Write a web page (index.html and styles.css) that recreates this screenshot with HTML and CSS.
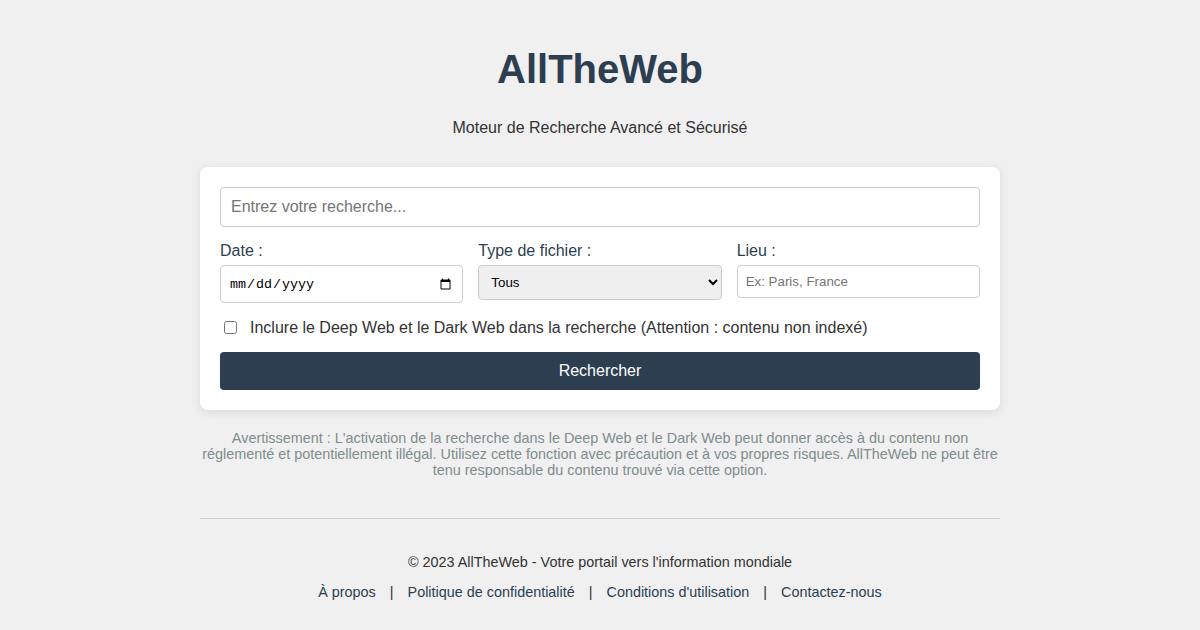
FILE: index.html
```html
<!DOCTYPE html>
<html lang="fr">
<head>
<meta charset="utf-8">
<title>AllTheWeb</title>
<link rel="stylesheet" href="styles.css">
</head>
<body>
<div class="container">
  <header class="header">
    <h1 class="logo">AllTheWeb</h1>
    <p class="subtitle">Moteur de Recherche Avancé et Sécurisé</p>
  </header>
  <form class="card">
    <input class="search" type="text" placeholder="Entrez votre recherche...">
    <div class="filters">
      <div class="field">
        <label class="label" for="date">Date :</label>
        <input class="control date" id="date" type="date">
      </div>
      <div class="field">
        <label class="label" for="type">Type de fichier :</label>
        <select class="control select" id="type">
          <option>Tous</option>
        </select>
      </div>
      <div class="field">
        <label class="label" for="lieu">Lieu :</label>
        <input class="control" id="lieu" type="text" placeholder="Ex: Paris, France">
      </div>
    </div>
    <div class="check-row">
      <input class="check" type="checkbox" id="deep">
      <label class="check-label" for="deep">Inclure le Deep Web et le Dark Web dans la recherche (Attention : contenu non indexé)</label>
    </div>
    <button class="submit" type="button">Rechercher</button>
  </form>
  <p class="warning">Avertissement : L'activation de la recherche dans le Deep Web et le Dark Web peut donner accès à du contenu non réglementé et potentiellement illégal. Utilisez cette fonction avec précaution et à vos propres risques. AllTheWeb ne peut être tenu responsable du contenu trouvé via cette option.</p>
  <footer class="footer">
    <p class="footer-text">© 2023 AllTheWeb - Votre portail vers l'information mondiale</p>
    <p class="footer-links">
      <a href="#">À propos</a><span class="sep">|</span><a href="#">Politique de confidentialité</a><span class="sep">|</span><a href="#">Conditions d'utilisation</a><span class="sep">|</span><a href="#">Contactez-nous</a>
    </p>
  </footer>
</div>
</body>
</html>
```
FILE: styles.css
```css
* { box-sizing: border-box; }
html, body { height: 100%; }
body {
  margin: 0;
  padding: 20px;
  background: #f0f0f0;
  font-family: "Liberation Sans", Arial, sans-serif;
  color: #333;
  overflow: hidden;
}
.container {
  max-width: 800px;
  margin: 0 auto;
}
.header { text-align: center; }
.logo {
  margin: 27px 0 27px;
  font-size: 40px;
  font-weight: bold;
  color: #2c3e50;
}
.subtitle {
  margin: 0 0 30px;
  font-size: 16px;
  color: #333;
}
.card {
  background: #fff;
  border-radius: 8px;
  padding: 20px;
  box-shadow: 0 2px 10px rgba(0,0,0,0.1);
}
.search {
  display: block;
  width: 100%;
  padding: 10px;
  font-size: 16px;
  font-family: "Liberation Sans", Arial, sans-serif;
  border: 1px solid #ccc;
  border-radius: 4px;
  margin-bottom: 15px;
}
.filters {
  display: flex;
  gap: 15px;
  margin-bottom: 15px;
}
.field { flex: 1; min-width: 0; }
.label {
  display: block;
  margin-bottom: 5px;
  font-size: 16px;
  color: #2c3e50;
}
.control {
  display: block;
  width: 100%;
  padding: 8px;
  border: 1px solid #ccc;
  border-radius: 4px;
}
.date {
  font-family: "Liberation Mono", "Courier New", monospace;
  padding: 9.5px 8px;
}
.date::-webkit-datetime-edit {
  font-family: "Liberation Mono", "Courier New", monospace;
}
.select { background: #efefef; }
.check-row {
  display: flex;
  align-items: center;
  margin-bottom: 15px;
  font-size: 16px;
}
.check {
  margin: 3px 13px 3px 4px;
}
.check-label { color: #333; }
.submit {
  display: block;
  width: 100%;
  padding: 10px;
  border: none;
  border-radius: 4px;
  background: #2c3e50;
  color: #fff;
  font-size: 16px;
  font-family: "Liberation Sans", Arial, sans-serif;
}
.warning {
  margin: 20px 0 0;
  font-size: 14.4px;
  color: #7f8c8d;
  text-align: center;
}
.footer {
  margin-top: 40px;
  padding-top: 20px;
  border-top: 1px solid #ccc;
  text-align: center;
  font-size: 14.4px;
}
.footer-text { margin: 14.4px 0; color: #333; }
.footer-links { margin: 14.4px 0; }
.footer-links a { color: #2c3e50; text-decoration: none; }
.sep { margin: 0 14px; color: #333; }
```
